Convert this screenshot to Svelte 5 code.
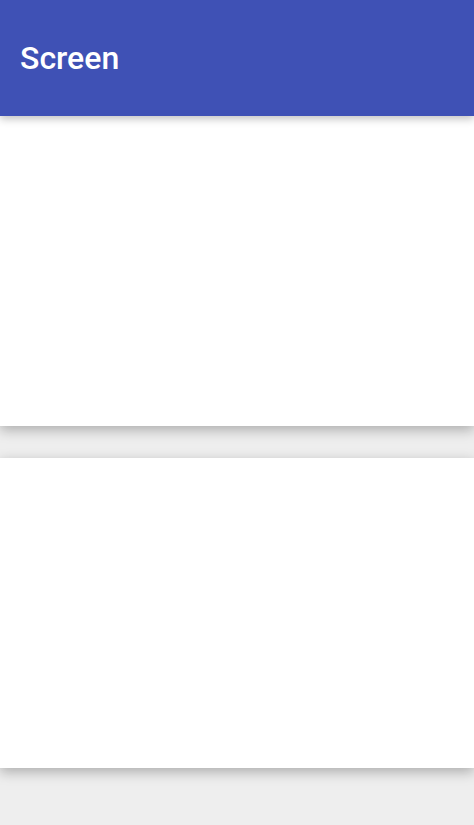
<script>
	export let title = 'Screen';
	export let cards = [{ id: 1 }, { id: 2 }];
</script>

<svelte:head>
	<title>{title}</title>
</svelte:head>

<div class="screen">
	<header class="app-bar">
		<h1>{title}</h1>
	</header>
	<main class="card-list">
		{#each cards as card (card.id)}
			<section class="card"></section>
		{/each}
	</main>
</div>

<style>
	:global(body) {
		background: #eeeeee;
	}

	.screen {
		min-height: 100vh;
		display: flex;
		flex-direction: column;
		font-family: Roboto, sans-serif;
	}

	.app-bar {
		position: relative;
		z-index: 1;
		display: flex;
		align-items: center;
		height: 116px;
		padding: 0 20px;
		background: #3f51b5;
		box-shadow: 0 3px 8px rgba(0, 0, 0, 0.24);
	}

	h1 {
		margin: 0;
		font-size: 32px;
		line-height: 40px;
		font-weight: 500;
		color: #ffffff;
	}

	.card-list {
		display: flex;
		flex-direction: column;
		gap: 32px;
	}

	.card {
		height: 310px;
		background: #ffffff;
		box-shadow: 0 4px 12px rgba(0, 0, 0, 0.28);
	}
</style>
